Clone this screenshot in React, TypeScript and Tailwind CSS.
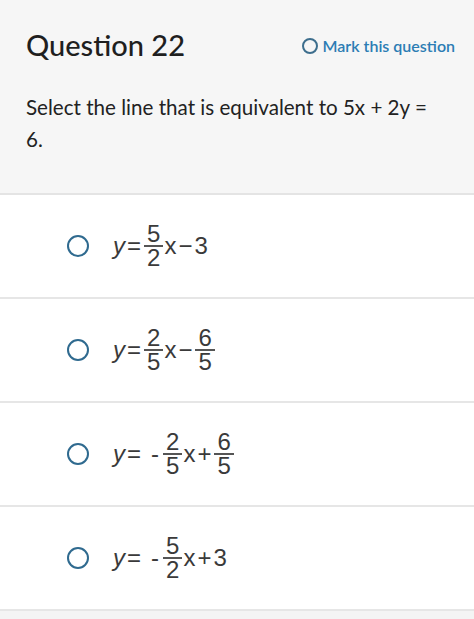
import React from "react";

const Frac = ({ n, d }: { n: string; d: string }) => (
  <span className="inline-flex flex-col items-center mx-[1px]">
    <span className="leading-[20px] px-[3px]">{n}</span>
    <span className="h-[1.5px] w-full bg-[#555] my-[1.5px]" />
    <span className="leading-[20px] px-[3px]">{d}</span>
  </span>
);

const Radio = () => (
  <span className="w-[22px] h-[22px] rounded-full border-[2.5px] border-[#2f6a8f] shrink-0" />
);

const Row = ({ children }: { children: React.ReactNode }) => (
  <div className="h-[104px] border-b-2 border-[#e6e6e6] flex items-center pl-[67px]">
    <Radio />
    <div
      className="ml-[24px] flex items-center text-[24px] leading-[24px] text-[#3a3a3a]"
      style={{ fontFamily: '"Liberation Sans", Arial, sans-serif' }}
    >
      {children}
    </div>
  </div>
);

const Y = () => (
  <>
    <span className="italic">y</span>
    <span className="ml-[2px] mr-[2px]">=</span>
  </>
);

export default function App() {
  return (
    <div className="w-[474px] h-[619px] bg-white overflow-hidden" style={{ fontFamily: "Lato, sans-serif" }}>
      <div className="h-[195px] bg-[#f6f6f6] border-b-2 border-[#e4e4e4] px-[26px] pt-[26px]">
        <div className="flex items-center justify-between">
          <h1 className="text-[29px] font-medium text-[#1f1f1f] leading-[38px]">Question 22</h1>
          <div className="flex items-center mr-[-7px] mt-[2px]">
            <span className="w-[16px] h-[16px] rounded-full border-2 border-[#3d6e8d]" />
            <span className="ml-[5px] text-[16px] font-semibold text-[#2c7db4]">Mark this question</span>
          </div>
        </div>
        <p className="mt-[27px] text-[20.6px] leading-[32px] text-[#222] pr-[10px]">
          Select the line that is equivalent to 5x + 2y = 6.
        </p>
      </div>
      <Row>
        <Y />
        <Frac n="5" d="2" />
        <span>x</span>
        <span className="mx-[2px]">−</span>
        <span>3</span>
      </Row>
      <Row>
        <Y />
        <Frac n="2" d="5" />
        <span>x</span>
        <span className="mx-[2px]">−</span>
        <Frac n="6" d="5" />
      </Row>
      <Row>
        <Y />
        <span className="ml-[8px] mr-[3px]">-</span>
        <Frac n="2" d="5" />
        <span>x</span>
        <span className="mx-[2px]">+</span>
        <Frac n="6" d="5" />
      </Row>
      <Row>
        <Y />
        <span className="ml-[8px] mr-[3px]">-</span>
        <Frac n="5" d="2" />
        <span>x</span>
        <span className="mx-[2px]">+</span>
        <span>3</span>
      </Row>
      <div className="h-[12px] bg-[#f4f4f4]" />
    </div>
  );
}
